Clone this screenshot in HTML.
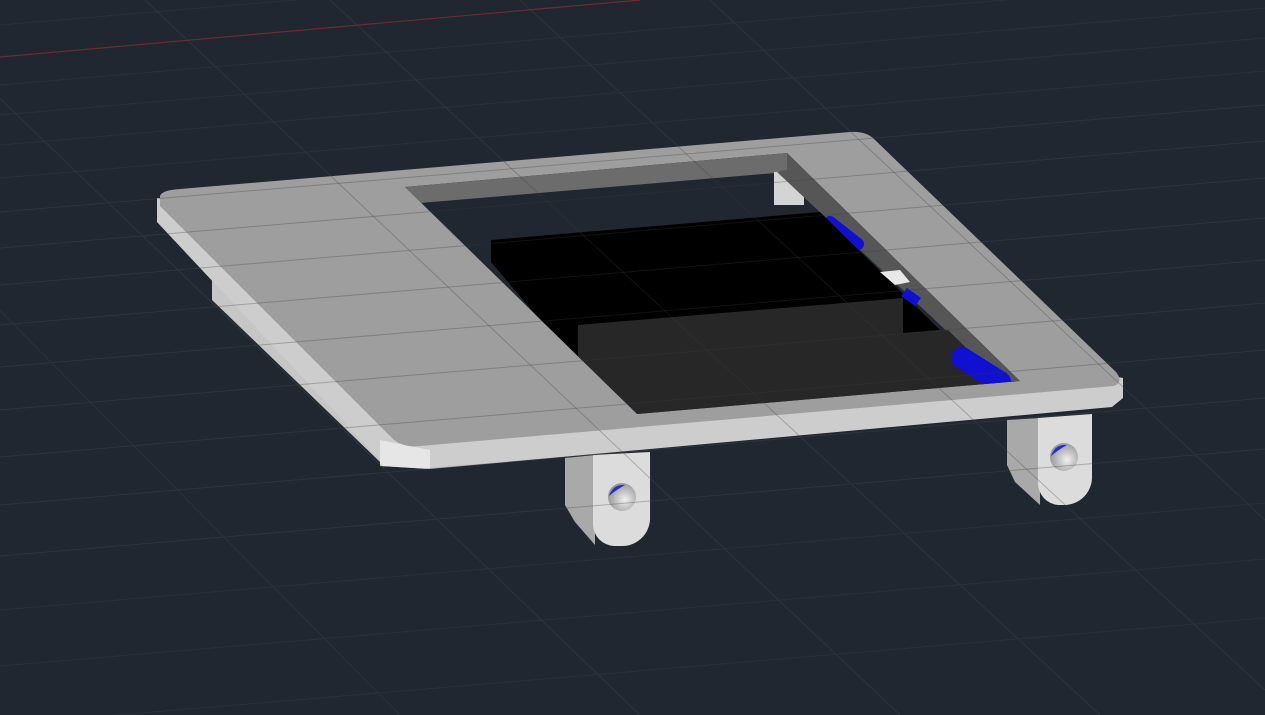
<!DOCTYPE html>
<html><head><meta charset="utf-8"><style>
html,body{margin:0;padding:0;background:#212730;overflow:hidden}
svg{display:block}
</style></head><body>
<svg width="1265" height="715" viewBox="0 0 1265 715" xmlns="http://www.w3.org/2000/svg">
<defs>
<radialGradient id="hole" cx="0.6" cy="0.6" r="0.7">
<stop offset="0" stop-color="#f0f0f0"/><stop offset="1" stop-color="#8a8a8a"/>
</radialGradient>
<clipPath id="hc"><polygon points="405,187 787,153 1020,381 637,414"/></clipPath>
</defs>
<rect width="1265" height="715" fill="#212730"/>
<g stroke="#2a313b" stroke-width="1" fill="none">
<line x1="0" y1="25" x2="1265" y2="-82"/>
<line x1="0" y1="85" x2="1265" y2="-22"/>
<line x1="0" y1="115" x2="1265" y2="8"/>
<line x1="0" y1="145" x2="1265" y2="38"/>
<line x1="0" y1="178" x2="1265" y2="71"/>
<line x1="0" y1="212" x2="1265" y2="105"/>
<line x1="0" y1="248" x2="1265" y2="141"/>
<line x1="0" y1="285" x2="1265" y2="178"/>
<line x1="0" y1="325" x2="1265" y2="218"/>
<line x1="0" y1="367" x2="1265" y2="260"/>
<line x1="0" y1="410" x2="1265" y2="303"/>
<line x1="0" y1="457" x2="1265" y2="350"/>
<line x1="0" y1="505" x2="1265" y2="398"/>
<line x1="0" y1="556" x2="1265" y2="449"/>
<line x1="0" y1="610" x2="1265" y2="503"/>
<line x1="0" y1="666" x2="1265" y2="559"/>
<line x1="0" y1="725" x2="1265" y2="618"/>
<line x1="145" y1="0" x2="900" y2="715"/>
<line x1="-40" y1="60" x2="640" y2="715"/>
<line x1="330" y1="0" x2="1100" y2="715"/>
<line x1="520" y1="0" x2="1265" y2="690"/>
<line x1="710" y1="0" x2="1265" y2="520"/>
<line x1="-60" y1="250" x2="400" y2="715"/>
</g>
<line x1="0" y1="57" x2="640" y2="0" stroke="#6e2b33" stroke-width="1.2"/>
<polygon points="212,270 212,300 380,462 400,445" fill="#c6c6c6"/>
<path d="M565,458 L595,455 L595,545 L575,522 L565,505 Z" fill="#a9a9a9"/>
<path d="M593,455 L650,452 L650,520 A28,28 0 0 1 622,546 L614,546 A22,22 0 0 1 593,524 Z" fill="#dcdcdc"/>
<circle cx="622" cy="497" r="14" fill="url(#hole)"/>
<path d="M609,496 Q613,484 625,485 Q616,490 609,496 Z" fill="#2430c8"/>
<path d="M1007,420 L1040,418 L1040,505 L1015,482 L1007,465 Z" fill="#a9a9a9"/>
<path d="M1038,418 L1092,414 L1092,478 A28,28 0 0 1 1066,505 L1058,505 A22,22 0 0 1 1038,484 Z" fill="#dcdcdc"/>
<circle cx="1064" cy="457" r="14" fill="url(#hole)"/>
<path d="M1051,456 Q1055,444 1067,445 Q1058,450 1051,456 Z" fill="#2430c8"/>
<polygon points="157,198 157,222 380,460 380,466 430,469 1112,407 1123,398 1123,378 160,198" fill="#cdcdcd"/>
<polygon points="380,440 380,466 430,469 430,450" fill="#e6e6e6"/>
<path d="M160,196 Q162,190 180,189 L850,132 Q866,131 874,139 L1116,372 Q1124,382 1114,386 L420,446 Q402,448 392,438 L160,206 Z" fill="#9e9e9e"/>
<polygon points="405,187 787,153 1020,381 637,414" fill="#212730"/>
<g clip-path="url(#hc)">
<polygon points="405,187 787,153 787,172 420,203" fill="#6c6c6c"/>
<polygon points="774,172 804,170 804,205 774,205" fill="#d4d4d4"/>
<polygon points="787,153 1020,381 1000,381 777,172 787,170" fill="#565656"/>
<line x1="830" y1="222" x2="858" y2="244" stroke="#1010d0" stroke-width="12" stroke-linecap="round"/>
<polygon points="491,240 820,212 940,330 905,333 905,340 578,365 491,262" fill="#000"/>
<polygon points="880,272 900,270 910,282 895,285" fill="#e8e8e8"/>
<line x1="904" y1="292" x2="918" y2="302" stroke="#1010d0" stroke-width="10"/>
<polygon points="578,325 903,298 903,333 948,330 1005,386 640,415 578,360" fill="#272727"/>
<line x1="962" y1="358" x2="1000" y2="382" stroke="#1010d0" stroke-width="22" stroke-linecap="round"/>
</g>
<g stroke="rgba(60,60,60,0.3)" stroke-width="1" fill="none">
<line x1="0" y1="212" x2="1265" y2="105"/>
<line x1="0" y1="248" x2="1265" y2="141"/>
<line x1="0" y1="285" x2="1265" y2="178"/>
<line x1="0" y1="325" x2="1265" y2="218"/>
<line x1="0" y1="367" x2="1265" y2="260"/>
<line x1="0" y1="410" x2="1265" y2="303"/>
<line x1="0" y1="457" x2="1265" y2="350"/>
<line x1="0" y1="505" x2="1265" y2="398"/>
<line x1="0" y1="556" x2="1265" y2="449"/>
<line x1="145" y1="0" x2="900" y2="715"/>
<line x1="-40" y1="60" x2="640" y2="715"/>
<line x1="330" y1="0" x2="1100" y2="715"/>
<line x1="520" y1="0" x2="1265" y2="690"/>
<line x1="710" y1="0" x2="1265" y2="520"/>
</g>
</svg>
</body></html>
